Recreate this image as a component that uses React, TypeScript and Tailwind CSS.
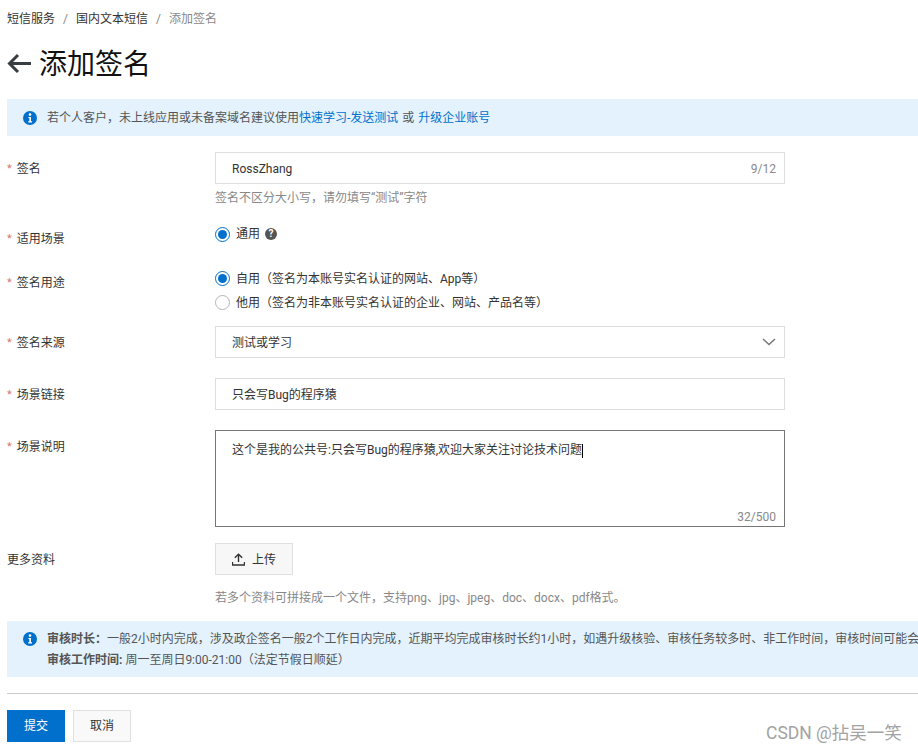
import React from "react";

const font = { fontFamily: 'Roboto, "Noto Sans CJK SC", sans-serif' };

function Info({ className }: { className?: string }) {
  return (
    <svg width="14" height="14" viewBox="0 0 14 14" className={className}>
      <circle cx="7" cy="7" r="7" fill="#0070cc" />
      <circle cx="7" cy="3.6" r="1.3" fill="#fff" />
      <path d="M5.4 6h2.6v4.3h1v1.1H5.2v-1.1h1.1V7.1h-.9z" fill="#fff" />
    </svg>
  );
}

function Radio({ on }: { on?: boolean }) {
  return on ? (
    <span className="flex h-[15px] w-[15px] shrink-0 items-center justify-center rounded-full border border-[#0070cc] bg-white">
      <span className="h-[9px] w-[9px] rounded-full bg-[#0070cc]" />
    </span>
  ) : (
    <span className="h-[15px] w-[15px] shrink-0 rounded-full border border-[#b5b5b5] bg-white" />
  );
}

function Label({ children, req = true }: { children: React.ReactNode; req?: boolean }) {
  return (
    <div className="flex h-[32px] w-[208px] shrink-0 items-center pt-[2px] text-[12px] text-[#333]">
      {req && <span className="mr-[5px] text-[11px] text-[#d9776b]">*</span>}
      {children}
    </div>
  );
}

const inputBox = "flex h-[32px] w-[570px] items-center justify-between border border-[#dedede] bg-white pt-[2px] pl-[16px] pr-[8px] text-[12px] text-[#333]";

export default function App() {
  return (
    <div style={font} className="relative h-[751px] w-[918px] overflow-hidden bg-white pl-[7px]">
      <div className="flex h-[37px] items-center text-[12px] text-[#333]">
        <span>短信服务</span>
        <span className="mx-[8px] text-[#888]">/</span>
        <span>国内文本短信</span>
        <span className="mx-[8px] text-[#888]">/</span>
        <span className="text-[#888]">添加签名</span>
      </div>

      <div className="flex h-[62px] items-center pb-[6px]">
        <svg width="24" height="21" viewBox="0 0 24 21" className="mr-[8px] mb-[3px]">
          <path d="M24 10.5H2.5M11 2 2.5 10.5 11 19" fill="none" stroke="#373d41" strokeWidth="3" />
        </svg>
        <span className="text-[28px] leading-none text-[#111]">添加签名</span>
      </div>

      <div className="flex h-[37px] items-center bg-[#e3f2fd] pl-[16px] text-[12px] whitespace-nowrap text-[#555]">
        <Info className="mr-[10px] shrink-0" />
        <span>若个人客户，未上线应用或未备案域名建议使用</span>
        <span className="text-[#0070cc]">快速学习-发送测试</span>
        <span className="mx-[4px]">或</span>
        <span className="text-[#0070cc]">升级企业账号</span>
      </div>

      <div className="mt-[16px] flex">
        <Label>签名</Label>
        <div>
          <div className={inputBox}>
            <span>RossZhang</span>
            <span className="text-[#888]">9/12</span>
          </div>
          <div className="mt-[7px] h-[14px] text-[12px] leading-[14px] text-[#888]">签名不区分大小写，请勿填写“测试”字符</div>
        </div>
      </div>

      <div className="mt-[17px] flex">
        <Label>适用场景</Label>
        <div className="flex h-[24px] items-center text-[12px] text-[#333]">
          <Radio on />
          <span className="ml-[6px]">通用</span>
          <span className="ml-[5px] flex h-[12px] w-[12px] items-center justify-center rounded-full bg-[#555] text-[10px] leading-none font-bold text-white">?</span>
        </div>
      </div>

      <div className="mt-[12px] flex">
        <Label>签名用途</Label>
        <div className="text-[12px] text-[#333]">
          <div className="flex h-[24px] items-center">
            <Radio on />
            <span className="ml-[6px] pt-[1px]">自用（签名为本账号实名认证的网站、App等）</span>
          </div>
          <div className="flex h-[24px] items-center">
            <Radio />
            <span className="ml-[6px] pt-[1px]">他用（签名为非本账号实名认证的企业、网站、产品名等）</span>
          </div>
        </div>
      </div>

      <div className="mt-[12px] flex">
        <Label>签名来源</Label>
        <div className={inputBox}>
          <span>测试或学习</span>
          <svg width="14" height="8" viewBox="0 0 14 8" className="mb-[2px]">
            <path d="M1 1l6 5.5L13 1" fill="none" stroke="#777" strokeWidth="1.5" />
          </svg>
        </div>
      </div>

      <div className="mt-[20px] flex">
        <Label>场景链接</Label>
        <div className={inputBox}>
          <span>只会写Bug的程序猿</span>
        </div>
      </div>

      <div className="mt-[20px] flex">
        <Label>场景说明</Label>
        <div className="relative h-[97px] w-[570px] border border-[#757575] bg-white pt-[10px] pl-[16px] text-[12px] leading-[18px] text-[#333]">
          <span>这个是我的公共号:只会写Bug的程序猿,欢迎大家关注讨论技术问题</span>
          <span className="inline-block h-[14px] w-px bg-black align-middle" />
          <span className="absolute right-[8px] bottom-0 text-[#888]">32/500</span>
        </div>
      </div>

      <div className="mt-[16px] flex">
        <Label req={false}>更多资料</Label>
        <div>
          <div className="flex h-[32px] w-[78px] items-center justify-center border border-[#e0e0e0] bg-[#f7f7f7] pt-[1px] text-[12px] text-[#333]">
            <svg width="13" height="13" viewBox="0 0 13 13" className="mr-[7px]">
              <path d="M6.5 9V1.3M2.8 4.8 6.5 1.2l3.7 3.6M.5 9v3h12V9" fill="none" stroke="#333" strokeWidth="1.4" />
            </svg>
            上传
          </div>
          <div className="mt-[15px] h-[16px] text-[12px] leading-[16px] text-[#888]">若多个资料可拼接成一个文件，支持png、jpg、jpeg、doc、docx、pdf格式。</div>
        </div>
      </div>

      <div className="mt-[15px] flex h-[56px] bg-[#e3f2fd] pt-[8px] pl-[16px] text-[12px] leading-[21px] whitespace-nowrap text-[#555]">
        <Info className="mt-[3px] mr-[10px] shrink-0" />
        <div>
          <div>
            <span className="font-bold">审核时长：</span>
            一般2小时内完成，涉及政企签名一般2个工作日内完成，近期平均完成审核时长约1小时，如遇升级核验、审核任务较多时、非工作时间，审核时间可能会延长。
          </div>
          <div>
            <span className="font-bold">审核工作时间: </span>
            周一至周日9:00-21:00（法定节假日顺延）
          </div>
        </div>
      </div>

      <div className="mt-[16px] h-px bg-[#cccccc]" />

      <div className="mt-[16px] flex gap-[8px] text-[12px]">
        <div className="flex h-[32px] w-[58px] items-center justify-center bg-[#0070cc] text-white">提交</div>
        <div className="flex h-[32px] w-[58px] items-center justify-center border border-[#e0e0e0] bg-[#f9f9f9] text-[#333]">取消</div>
      </div>

      <div className="absolute top-[722px] left-[766px] text-[17.5px] leading-[22px] whitespace-nowrap text-[#a3a3a3]">CSDN @拈吴一笑</div>
    </div>
  );
}
